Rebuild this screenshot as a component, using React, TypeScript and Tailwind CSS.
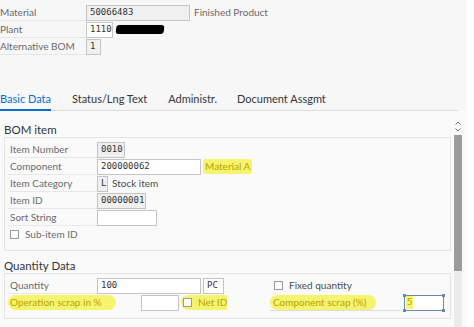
import React from 'react';

const sans = "font-['Lato','Open_Sans',sans-serif]";
const mono = "font-['DejaVu_Sans_Mono','Liberation_Mono',monospace]";

function Field({
  value,
  width,
  grey,
}: {
  value?: string;
  width: string;
  grey?: boolean;
}) {
  return (
    <div
      className={`${width} ${mono} shrink-0 h-[16px] flex items-center border border-[#c4c4c4] px-[3px] text-[9px] text-[#333] ${
        grey ? 'bg-[#f0f0f0]' : 'bg-white'
      }`}
    >
      {value}
    </div>
  );
}

function HeaderRow({ label, children }: { label: string; children: React.ReactNode }) {
  return (
    <div className="flex h-[17px] items-center whitespace-nowrap">
      <div className="w-[86px] shrink-0 h-[16px] flex items-center border-b border-[#e6e6e6] text-[10px] text-[#6a6a6a]">
        {label}
      </div>
      {children}
    </div>
  );
}

function ItemRow({ label, children }: { label: string; children: React.ReactNode }) {
  return (
    <div className="flex h-[17px] items-center whitespace-nowrap">
      <div className="ml-[3px] w-[89px] shrink-0 h-[16px] flex items-center pl-[2px] border-b border-[#e8e8e8] text-[10px] text-[#6a6a6a]">
        {label}
      </div>
      {children}
    </div>
  );
}

function Checkbox() {
  return <span className="inline-block shrink-0 w-[9px] h-[9px] border border-[#9a9a9a] bg-white" />;
}

export default function App() {
  return (
    <div className={`${sans} w-[474px] h-[327px] overflow-hidden bg-[#f7f7f7] flex`}>
      <div className="w-[467px] shrink-0 flex flex-col">
        <div className="pt-[4px] h-[88px]">
          <HeaderRow label="Material">
            <Field value="50066483" width="w-[104px]" grey />
            <span className="ml-[4px] text-[10px] text-[#6a6a6a]">Finished Product</span>
          </HeaderRow>
          <HeaderRow label="Plant">
            <Field value="1110" width="w-[27px]" />
            <span className="ml-[3px] w-[48px] h-[9px] bg-black rounded-[3px] -skew-x-6" />
          </HeaderRow>
          <HeaderRow label="Alternative BOM">
            <Field value="1" width="w-[15px]" grey />
          </HeaderRow>
        </div>

        <div className="flex h-[23px] items-end border-b border-[#dcdcdc] mr-[9px] text-[11px] text-[#32363a] whitespace-nowrap">
          <div className="pb-[2px] border-b-[2px] border-[#0a6ed1] text-[#0a6ed1] -mb-px">Basic Data</div>
          <div className="ml-[21px] pb-[3px]">Status/Lng Text</div>
          <div className="ml-[21px] pb-[3px]">Administr.</div>
          <div className="ml-[20px] pb-[3px]">Document Assgmt</div>
        </div>

        <div className="flex-1 flex bg-[#fafafa] min-h-0 pr-[4px]">
          <div className="flex-1 min-w-0 pl-[4px] pr-[2px]">
            <div className="pt-[12px] h-[26px] leading-[14px] text-[11.5px] text-[#32363a]">BOM item</div>
            <div className="border border-[#e4e4e4] pt-[3px] pb-[8px]">
              <ItemRow label="Item Number">
                <Field value="0010" width="w-[28px]" grey />
              </ItemRow>
              <ItemRow label="Component">
                <Field value="200000062" width="w-[104px]" />
                <span className="ml-[2px] px-[2px] text-[10px] text-[#b9a400] bg-[#f6f36e] rounded-[3px]">
                  Material A
                </span>
              </ItemRow>
              <ItemRow label="Item Category">
                <Field value="L" width="w-[11px]" grey />
                <span className="ml-[4px] text-[10px] text-[#4a4a4a]">Stock item</span>
              </ItemRow>
              <ItemRow label="Item ID">
                <Field value="00000001" width="w-[49px]" grey />
              </ItemRow>
              <ItemRow label="Sort String">
                <Field width="w-[60px]" />
              </ItemRow>
              <div className="flex h-[16px] items-center pl-[5px] gap-[6px] text-[10px] text-[#6a6a6a]">
                <Checkbox />
                <span>Sub-item ID</span>
              </div>
            </div>

            <div className="pt-[8px] h-[22px] leading-[14px] text-[11.5px] text-[#32363a]">Quantity Data</div>
            <div className="border border-[#e4e4e4] pt-[3px] pb-[7px] whitespace-nowrap">
              <div className="flex h-[17px] items-center">
                <div className="ml-[3px] w-[89px] shrink-0 h-[16px] flex items-center pl-[2px] border-b border-[#e8e8e8] text-[10px] text-[#6a6a6a]">
                  Quantity
                </div>
                <Field value="100" width="w-[104px]" />
                <div className="ml-[2px]">
                  <Field value="PC" width="w-[21px]" />
                </div>
                <div className="ml-[50px] flex items-center gap-[6px] text-[10px] text-[#4a4a4a]">
                  <Checkbox />
                  <span>Fixed quantity</span>
                </div>
              </div>
              <div className="flex h-[17px] items-center">
                <div className="ml-[3px] w-[133px] shrink-0 h-[16px] flex items-center">
                  <span className="pl-[2px] pr-[14px] text-[10px] text-[#b9a400] bg-[#f6f36e] rounded-full">
                    Operation scrap in %
                  </span>
                </div>
                <Field width="w-[38px]" />
                <div className="ml-[2px] w-[46px] shrink-0 flex items-center gap-[6px] pl-[2px] pr-[3px] bg-[#f6f36e] rounded-l-full text-[10px] text-[#b9a400]">
                  <Checkbox />
                  <span>Net ID</span>
                </div>
                <div className="ml-[43px] w-[130px] shrink-0 h-[16px] flex items-center border-b border-[#dcdcdc]">
                  <span className="pl-[3px] pr-[10px] text-[10px] text-[#b9a400] bg-[#f6f36e] rounded-full">
                    Component scrap (%)
                  </span>
                </div>
                <div className="relative ml-[4px] shrink-0 w-[40px] h-[16px] border border-[#6b86b3] bg-white flex items-center">
                  <span className={`${mono} ml-[1px] px-[1px] text-[9px] text-[#b9a400] bg-[#f6f36e]`}>5</span>
                  <span className="absolute -left-[2px] -top-[2px] w-[3px] h-[3px] bg-[#6b86b3]" />
                  <span className="absolute -right-[2px] -top-[2px] w-[3px] h-[3px] bg-[#6b86b3]" />
                  <span className="absolute -left-[2px] -bottom-[2px] w-[3px] h-[3px] bg-[#6b86b3]" />
                  <span className="absolute -right-[2px] -bottom-[2px] w-[3px] h-[3px] bg-[#6b86b3]" />
                </div>
              </div>
            </div>
          </div>
          <div className="w-[10px] shrink-0 flex flex-col items-center pt-[10px]">
            <svg width="6" height="4" viewBox="0 0 6 4" className="text-[#777]">
              <path d="M0.5 3.5 L3 1 L5.5 3.5" fill="none" stroke="currentColor" strokeWidth="1" />
            </svg>
            <svg width="6" height="4" viewBox="0 0 6 4" className="mt-[3px] text-[#777]">
              <path d="M0.5 0.5 L3 3 L5.5 0.5" fill="none" stroke="currentColor" strokeWidth="1" />
            </svg>
            <div className="mt-[3px] w-[8px] h-[136px] bg-[#9c9c9c]" />
            <div className="w-[8px] flex-1 bg-[#ececec]" />
          </div>
        </div>
      </div>
      <div className="flex-1 bg-white" />
    </div>
  );
}
